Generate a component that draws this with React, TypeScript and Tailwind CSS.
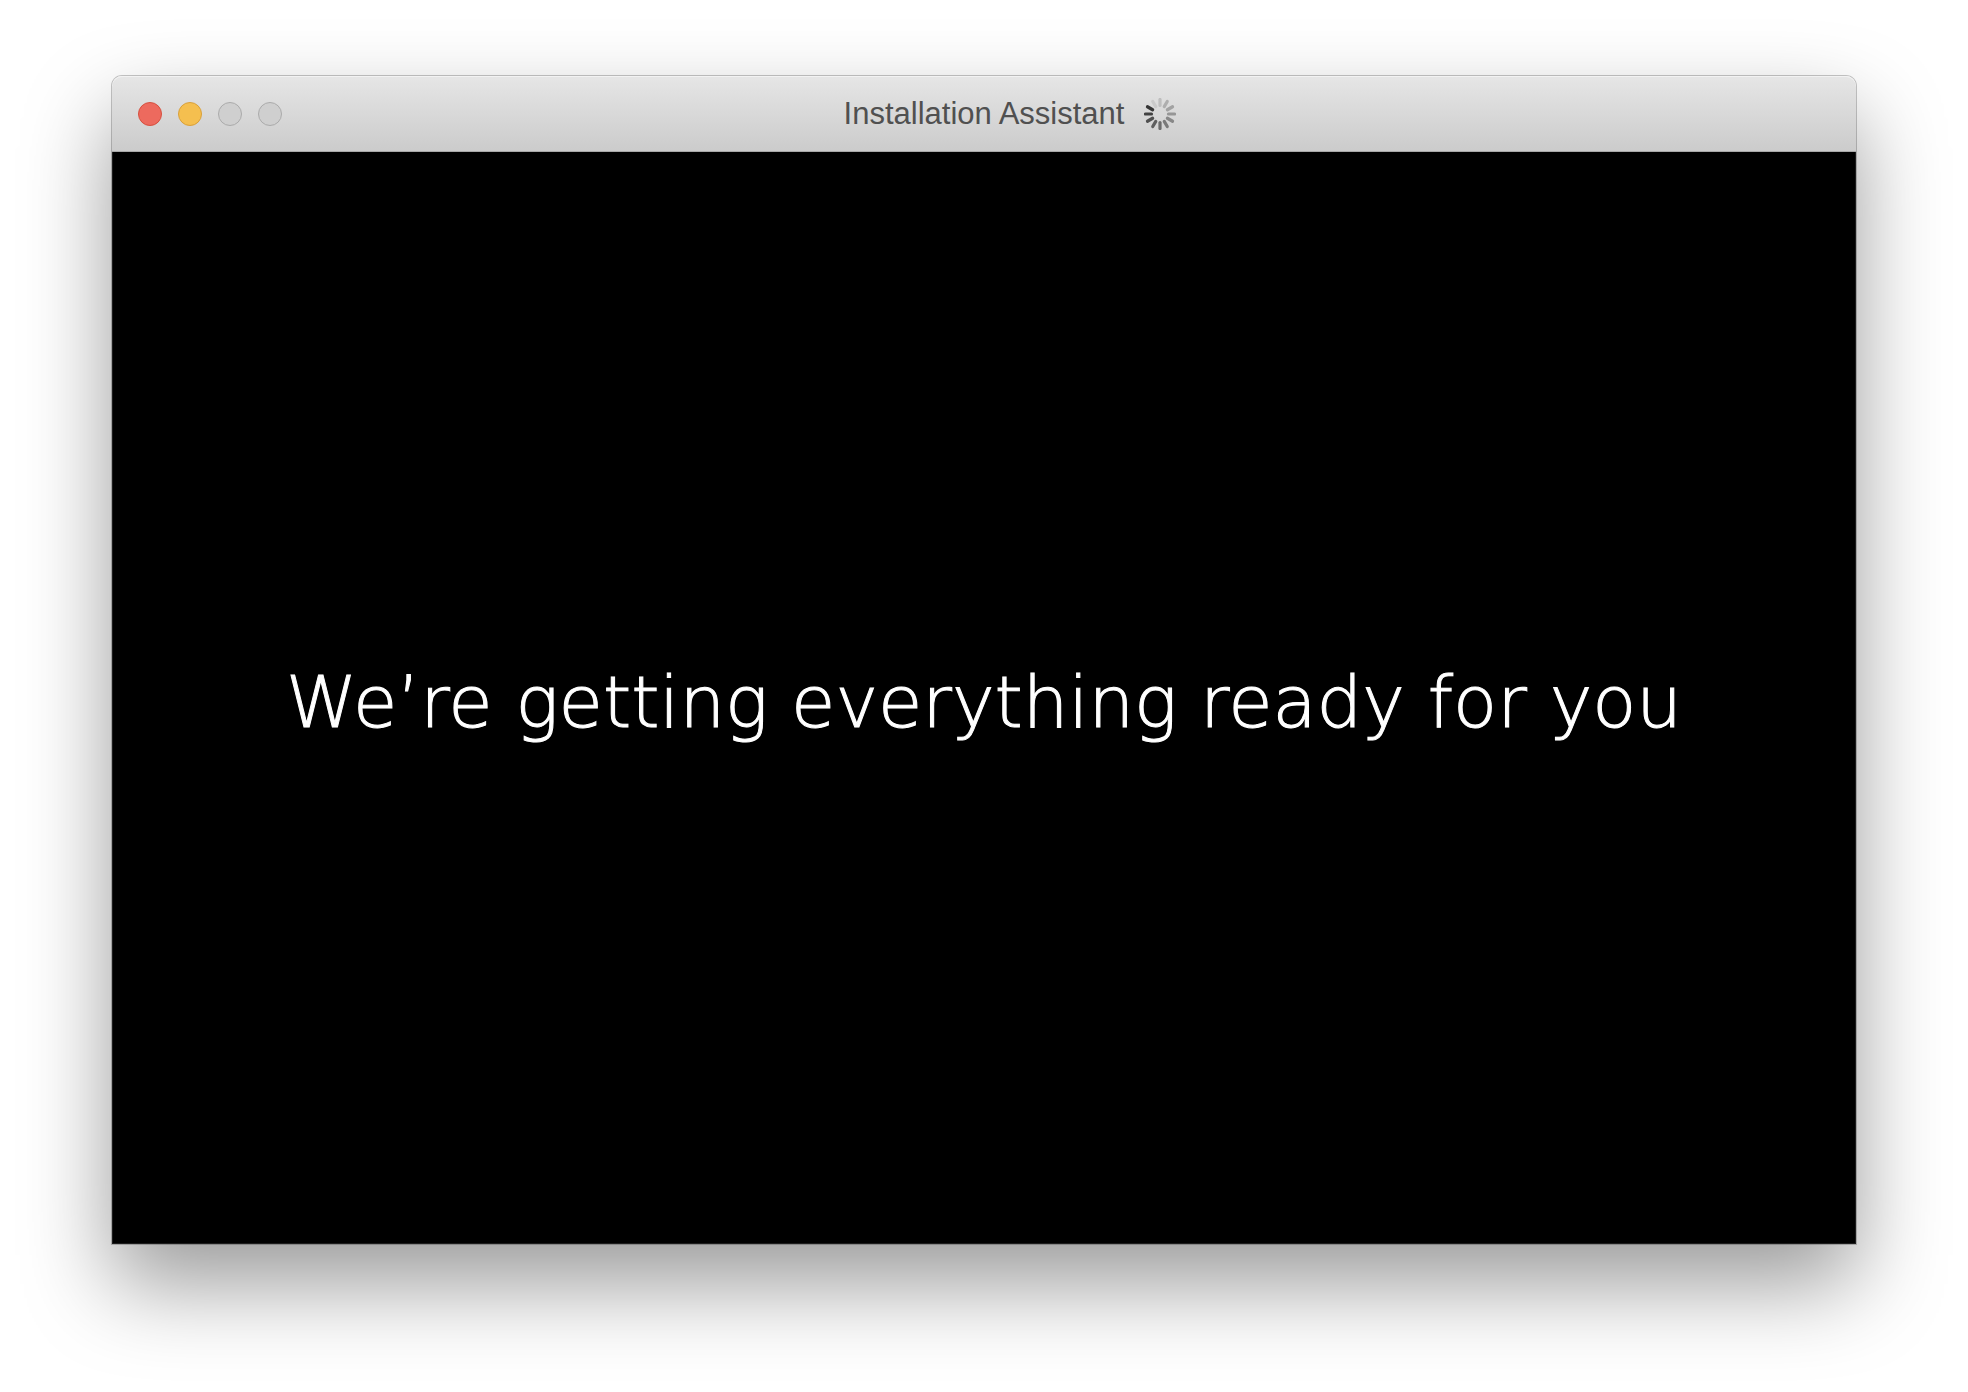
const BLADES = [
  "#bebebe",
  "#aeaeae",
  "#a2a2a2",
  "#969696",
  "#888888",
  "#7a7a7a",
  "#6c6c6c",
  "#5e5e5e",
  "#505050",
  "#424242",
  "#363636",
  "#cacaca",
];

const CONTROLS = [
  { name: "Close", style: "bg-[#ed6a5e] border-[#d6503f]", disabled: false },
  { name: "Minimize", style: "bg-[#f5bf4f] border-[#d9a03a]", disabled: false },
  { name: "Zoom", style: "bg-[#cfcfcf] border-[#ababab]", disabled: true },
  { name: "Full screen", style: "bg-[#cfcfcf] border-[#ababab]", disabled: true },
];

function Spinner() {
  return (
    <svg viewBox="-16 -16 32 32" className="w-8 h-8" role="img" aria-label="Loading">
      {BLADES.map((color, i) => (
        <line
          key={i}
          y1={-8.5}
          y2={-14.5}
          stroke={color}
          strokeWidth={3.2}
          strokeLinecap="round"
          transform={`rotate(${i * 30})`}
        />
      ))}
    </svg>
  );
}

function TitleBar() {
  return (
    <header className="grid grid-cols-[1fr_auto_1fr] items-center h-[76px] px-[26px] rounded-t-[10px] bg-linear-to-b from-[#e6e6e6] to-[#cbcbcb] shadow-[inset_0_1px_0_#f2f2f2,inset_0_-1px_0_#a8a8a8]">
      <div className="flex gap-4">
        {CONTROLS.map(({ name, style, disabled }) => (
          <button
            key={name}
            type="button"
            aria-label={name}
            disabled={disabled}
            className={`w-6 h-6 rounded-full border ${style}`}
          />
        ))}
      </div>
      <h1 className="text-[31px] leading-10 text-[#505050] font-['Liberation_Sans',sans-serif]">
        Installation Assistant
      </h1>
      <div className="pl-5">
        <Spinner />
      </div>
    </header>
  );
}

export default function App() {
  return (
    <div className="flex min-h-screen bg-white px-28 pt-[76px] pb-[148px]">
      <div className="flex flex-col flex-1 rounded-t-[10px] shadow-[0_0_0_1px_rgba(0,0,0,0.22),0_40px_88px_rgba(0,0,0,0.4)]">
        <TitleBar />
        <main className="flex flex-1 items-center justify-center pt-2 bg-black border border-t-0 border-[#1c1c1c]">
          {/* the stroke thickens the extra-light face a little */}
          <p className="text-[72px] leading-24 font-extralight text-white font-['DejaVu_Sans',sans-serif] [-webkit-text-stroke:1px_white]">
            We’re getting everything ready for you
          </p>
        </main>
      </div>
    </div>
  );
}
